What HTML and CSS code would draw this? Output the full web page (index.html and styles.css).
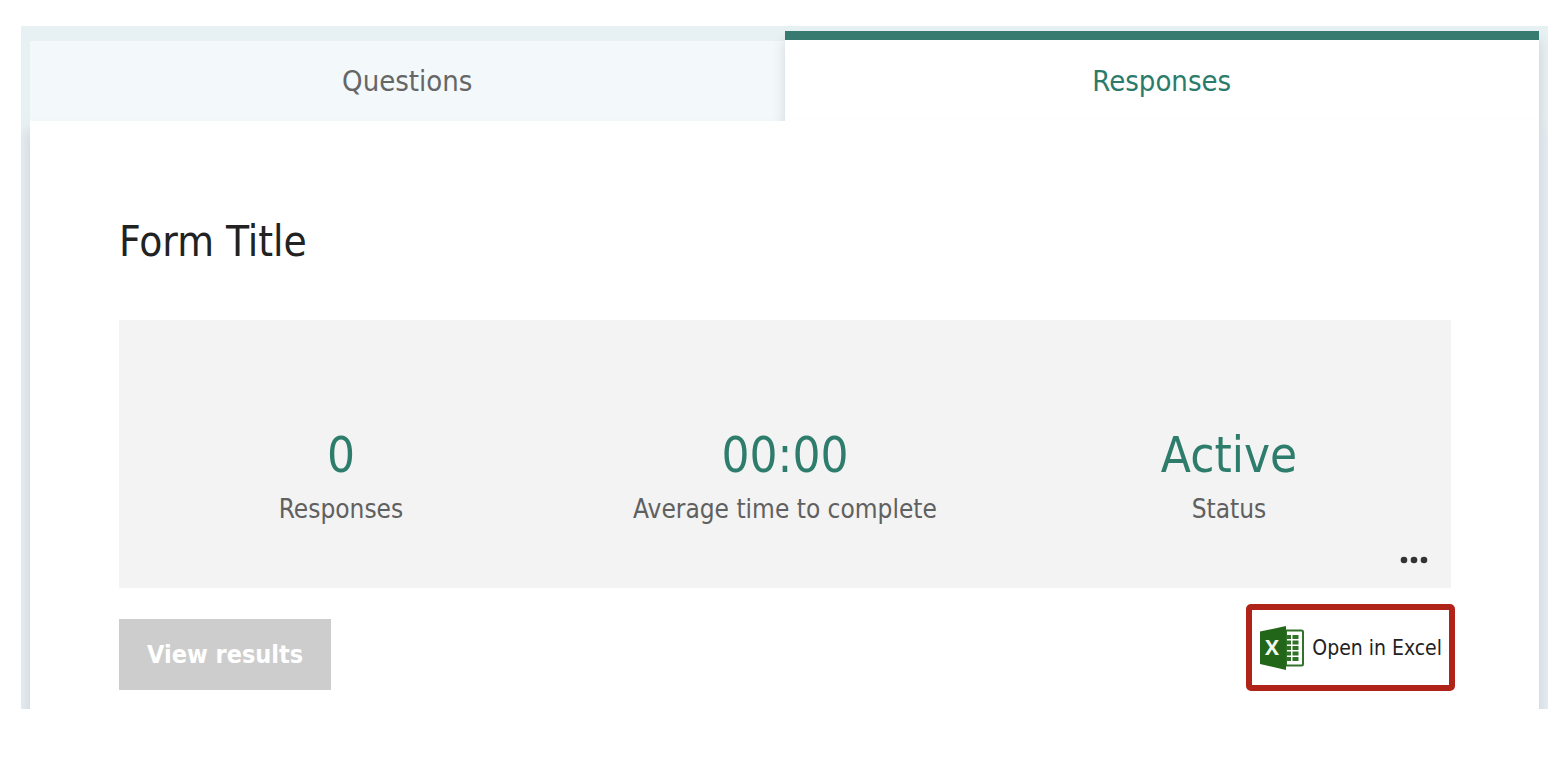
FILE: index.html
```html
<!DOCTYPE html>
<html lang="en">
    <head>
        <meta charset="utf-8" />
        <title>Form Title - Responses</title>
        <link rel="stylesheet" href="styles.css">
    </head>
    <body>
        <div class="page">
            <nav class="tabs">
                <button type="button" class="tab">Questions</button>
                <button type="button" class="tab active">Responses</button>
            </nav>

            <main class="panel">
                <h1>Form Title</h1>

                <section class="summary">
                    <div class="stats">
                        <div class="stat">
                            <div class="value">0</div>
                            <div class="label">Responses</div>
                        </div>
                        <div class="stat">
                            <div class="value">00:00</div>
                            <div class="label">Average time to complete</div>
                        </div>
                        <div class="stat">
                            <div class="value">Active</div>
                            <div class="label">Status</div>
                        </div>
                    </div>
                    <button type="button" class="more" aria-label="More options">
                        <svg width="28" height="8" viewBox="0 0 28 8">
                            <circle cx="4" cy="4" r="3.3" />
                            <circle cx="14" cy="4" r="3.3" />
                            <circle cx="24" cy="4" r="3.3" />
                        </svg>
                    </button>
                </section>

                <div class="actions">
                    <button type="button" class="view-results" disabled>View results</button>
                    <button type="button" class="excel">
                        <svg width="44" height="44" viewBox="0 0 44 44" aria-hidden="true">
                            <path d="M26 4.500h15.500q1.500 0 1.500 1.500v32q0 1.500-1.500 1.500H26z" fill="#fff" stroke="#2f7228" stroke-width="2" />
                            <path d="M26 9h5v4h-5zM32.500 9h6v4h-6zM26 14.500h5v4h-5zM32.500 14.500h6v4h-6zM26 20h5v4h-5zM32.500 20h6v4h-6zM26 25.500h5v4h-5zM32.500 25.500h6v4h-6zM26 31h5v4h-5zM32.500 31h6v4h-6z" fill="#2f7228" />
                            <path d="M0 5.500L26 0V44L0 38z" fill="#22661a" />
                            <text x="12" y="29" class="logo-letter">X</text>
                        </svg>
                        <span>Open in Excel</span>
                    </button>
                </div>
            </main>
        </div>
    </body>
</html>
```
FILE: styles.css
```css
* {
    box-sizing: border-box;
    margin: 0;
    padding: 0;
}

body {
    font-family: "DejaVu Sans Condensed", "DejaVu Sans", sans-serif;
    background-color: #fff;
    color: #222;
}

button {
    font-family: inherit;
    border: none;
    background: none;
    cursor: pointer;
}

.page {
    margin: 26px 20px 0 21px;
    padding: 5px 9px 0;
    background-color: #e7f0f2;
    overflow: hidden;
}

.tabs {
    display: flex;
    align-items: flex-end;
}

.tab {
    flex: 1;
    height: 80px;
    font-size: 29px;
    color: #666;
    background-color: #f3f8fb;
}

.tab.active {
    height: 90px;
    border-top: 9px solid #377b70;
    color: #2b7b6b;
    background-color: #fff;
    box-shadow: 0 10px 12px rgba(70, 80, 90, 0.2);
}

.panel {
    position: relative;
    padding: 92px 88px 18px 89px;
    background-color: #fff;
    box-shadow: 0 14px 12px 4px rgba(140, 130, 170, 0.22);
}

h1 {
    font-size: 42px;
    font-weight: normal;
    line-height: 58px;
    margin-bottom: 49px;
}

.summary {
    padding: 108px 0 9px;
    background-color: #f3f3f3;
}

.stats {
    display: grid;
    grid-template-columns: repeat(3, 1fr);
    text-align: center;
}

.value {
    font-size: 49px;
    line-height: 56px;
    color: #2e7c6c;
}

.label {
    font-size: 26px;
    line-height: 50px;
    color: #606060;
}

.more {
    display: block;
    margin-left: auto;
    padding: 22px 23px 15px;
    fill: #333;
}

.more svg {
    display: block;
}

.actions {
    display: flex;
    justify-content: space-between;
    align-items: flex-end;
    margin: 16px -4px 0 0;
}

.view-results {
    padding: 0 28px;
    height: 71px;
    margin-bottom: 1px;
    font-size: 25px;
    font-weight: bold;
    color: #fff;
    background-color: #cdcdcd;
}

.excel {
    display: flex;
    align-items: center;
    gap: 8px;
    height: 87px;
    padding: 0 7px 0 8px;
    font-size: 21px;
    color: #222;
    border: 6px solid #b02318;
    border-radius: 5px;
}

.logo-letter {
    font-family: "Open Sans", sans-serif;
    font-size: 21px;
    font-weight: bold;
    text-anchor: middle;
    fill: #f4faf2;
}
```
